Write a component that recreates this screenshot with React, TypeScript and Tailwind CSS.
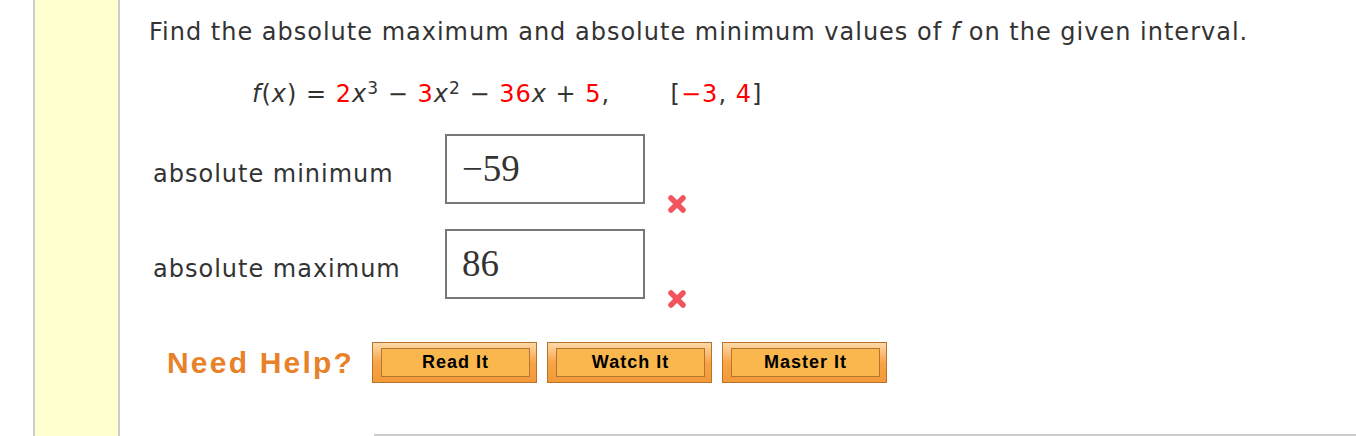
const sans = { fontFamily: '"DejaVu Sans", Verdana, sans-serif' };
const arial = { fontFamily: '"Liberation Sans", Arial, sans-serif' };
const serif = { fontFamily: '"Liberation Serif", "Times New Roman", serif' };

function WrongMark() {
  return (
    <svg width="24" height="24" viewBox="0 0 24 24" className="shrink-0">
      <path
        d="M6 6 L18 18 M18 6 L6 18"
        stroke="#f2545e"
        strokeWidth="5.5"
        strokeLinecap="round"
        fill="none"
      />
    </svg>
  );
}

function AnswerRow({ label, value }: { label: string; value: string }) {
  return (
    <div className="flex items-end">
      <div className="flex h-[70px] w-[296px] items-center pt-[10px] pl-[4px] text-[24px] tracking-[1px]">
        {label}
      </div>
      <div
        className="flex h-[70px] w-[200px] items-center border-2 border-[#777] pl-[15px] text-[37px] text-[#333]"
        style={serif}
      >
        {value}
      </div>
      <div className="ml-[20px] mb-[-12px]">
        <WrongMark />
      </div>
    </div>
  );
}

function HelpButton({ label }: { label: string }) {
  return (
    <div className="flex h-[41px] w-[165px] border border-[#b8722c] bg-gradient-to-b from-[#fcd9a6] via-[#f7a446] to-[#f39a38] pt-[5px] pr-[6px] pb-[5px] pl-[8px]">
      <div
        className="flex flex-1 items-center justify-center border border-[#b67432] bg-[#f9b74e] text-[18px] font-bold tracking-[1px] text-black"
        style={arial}
      >
        {label}
      </div>
    </div>
  );
}

export default function App() {
  return (
    <div className="flex h-[436px] w-[1356px] bg-white text-[#333]" style={sans}>
      {/* yellow side strip */}
      <div className="ml-[33px] w-[87px] shrink-0 border-x-2 border-[#cccccc] bg-[#ffffd0]" />

      <div className="flex flex-1 flex-col">
        <div className="flex flex-col pl-[29px]">
          <p className="mt-[15px] text-[24px] leading-[34px] tracking-[1px]">
            Find the absolute maximum and absolute minimum values of <i>f</i> on the given interval.
          </p>

          <p className="mt-[28px] ml-[103px] text-[24px] leading-[34px] tracking-[1px] whitespace-pre">
            <i>f</i>(<i>x</i>) = <span className="text-[#ff0000]">2</span><i>x</i>
            <sup className="text-[17px]">3</sup> − <span className="text-[#ff0000]">3</span><i>x</i>
            <sup className="text-[17px]">2</sup> − <span className="text-[#ff0000]">36</span><i>x</i> +{" "}
            <span className="text-[#ff0000]">5</span>,{"       "}[<span className="text-[#ff0000]">−3</span>,{" "}
            <span className="text-[#ff0000]">4</span>]
          </p>

          <div className="mt-[23px] flex flex-col gap-[25px]">
            <AnswerRow label="absolute minimum" value="−59" />
            <AnswerRow label="absolute maximum" value="86" />
          </div>

          <div className="mt-[41px] flex items-center gap-[10px]">
            <span
              className="ml-[18px] mr-[8px] text-[30px] font-bold tracking-[2.2px] text-[#e8822a]"
              style={arial}
            >
              Need Help?
            </span>
            <HelpButton label="Read It" />
            <HelpButton label="Watch It" />
            <HelpButton label="Master It" />
          </div>
        </div>

        <div className="mt-auto ml-[254px] border-t-2 border-[#cccccc]" />
      </div>
    </div>
  );
}
